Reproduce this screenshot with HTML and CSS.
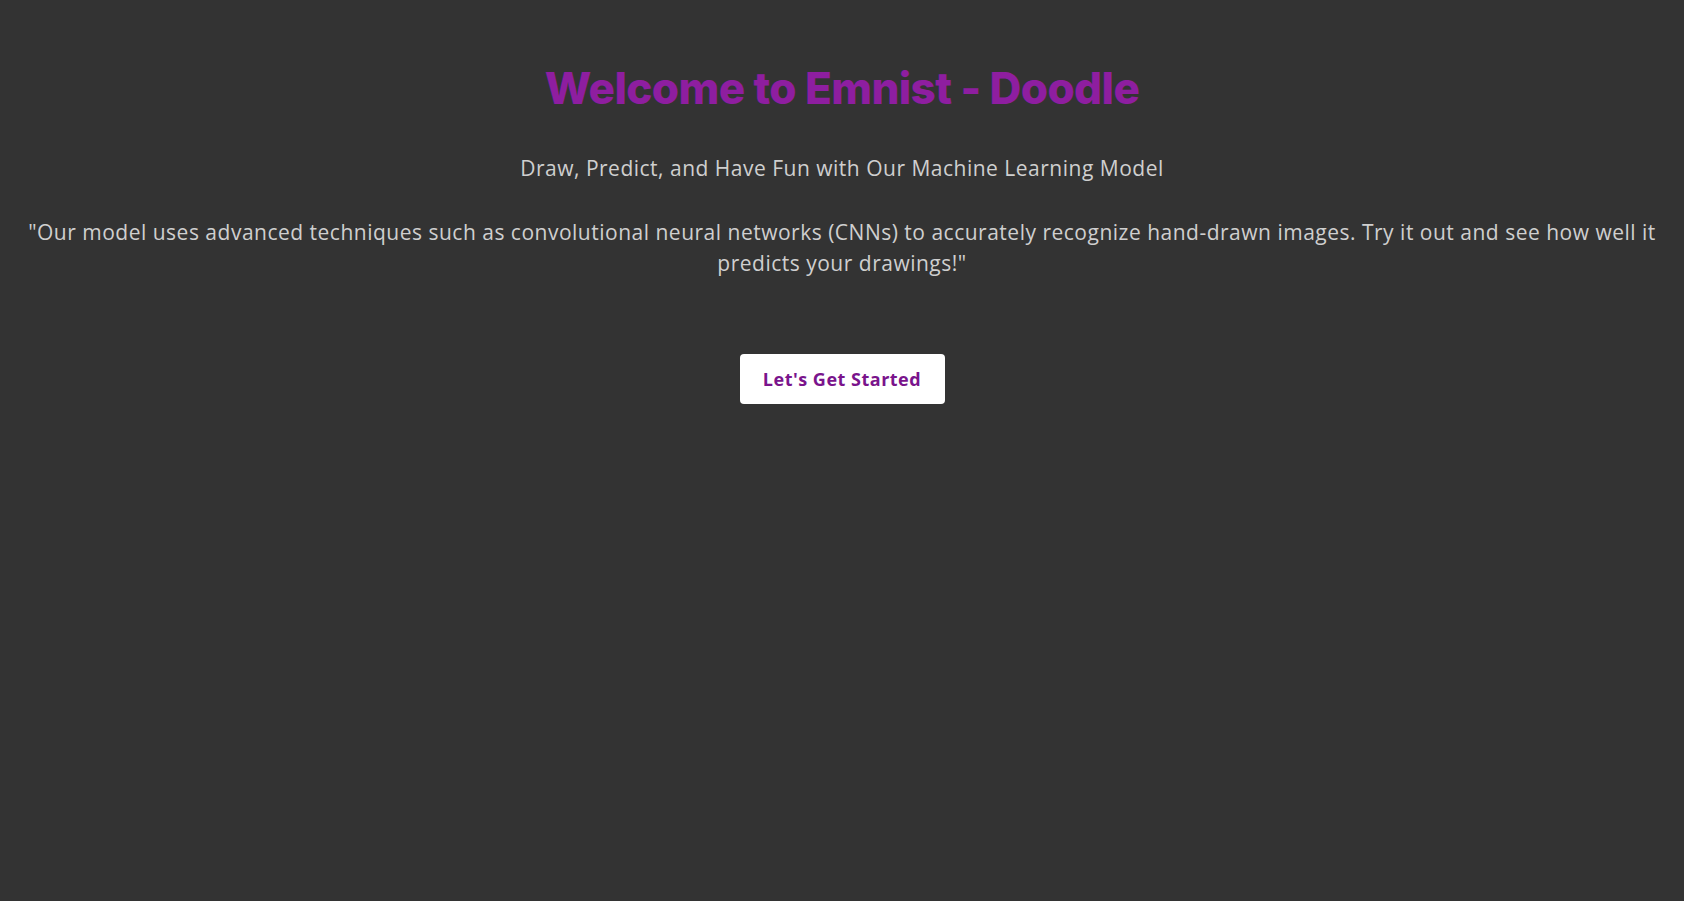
FILE: index.html
```html
<!DOCTYPE html>
<html lang="en">
<head>
    <meta charset="UTF-8">
    <meta name="viewport" content="width=device-width, initial-scale=1.0">
    <title>Emnist - Doodle</title>
    <link rel="stylesheet" href="styles.css">
</head>
<body>
    <div class="hero">
        <h1>Welcome to Emnist - Doodle</h1>
        <p class="tagline">Draw, Predict, and Have Fun with Our Machine Learning Model</p>
        <p class="about">"Our model uses advanced techniques such as convolutional neural networks (CNNs) to accurately recognize hand-drawn images. Try it out and see how well it predicts your drawings!"</p>
        <button class="start-btn">Let's Get Started</button>
    </div>
</body>
</html>
```

FILE: styles.css
```css
body {
    margin: 0;
    background-color: #333333;
    color: #cfcfcf;
    font-family: 'Open Sans', 'Noto Sans', sans-serif;
}
.hero {
    display: flex;
    flex-direction: column;
    align-items: center;
    text-align: center;
    padding: 62px 28px 0;
}
h1 {
    margin: 0;
    font-family: 'Inter', 'Open Sans', sans-serif;
    font-weight: 800;
    font-size: 44px;
    line-height: 53px;
    color: #8e1ea0;
    letter-spacing: -0.6px;
}
.tagline {
    margin: 39px 0 0;
    font-size: 21px;
    line-height: 29px;
    letter-spacing: 0.5px;
}
.about {
    margin: 34px 0 0;
    font-size: 21px;
    line-height: 31px;
    letter-spacing: 0.5px;
}
.start-btn {
    margin-top: 75px;
    width: 205px;
    height: 50px;
    background-color: #fff;
    color: #7a148c;
    border: none;
    border-radius: 4px;
    font-family: 'Open Sans', sans-serif;
    font-weight: 700;
    font-size: 18px;
    letter-spacing: 0.5px;
    cursor: pointer;
}
```
